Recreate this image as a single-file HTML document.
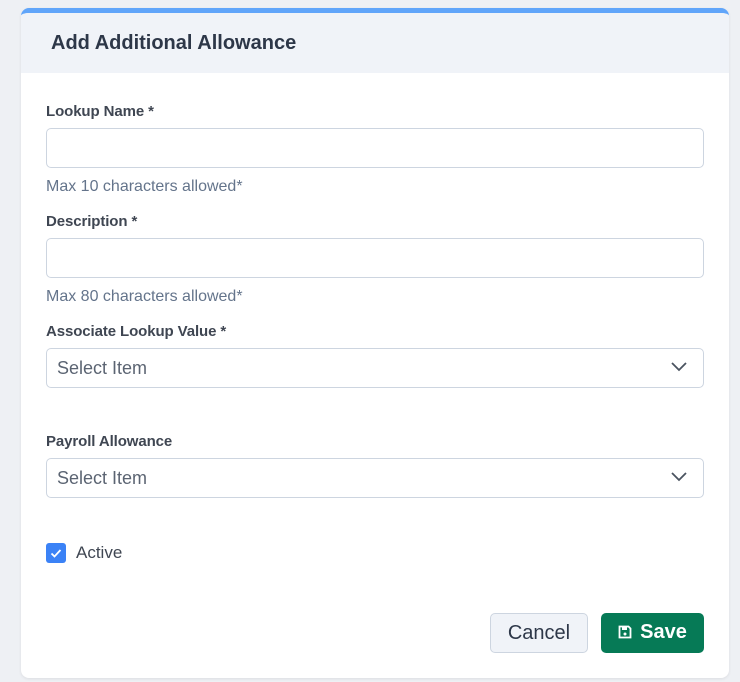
<!DOCTYPE html>
<html><head><meta charset="utf-8"><style>
*{box-sizing:border-box;margin:0;padding:0}
body{width:740px;height:682px;background:#eef0f4;font-family:"Liberation Sans",sans-serif;position:relative;overflow:hidden}
.card{position:absolute;left:21px;top:8px;width:708px;height:670px;background:#fff;border-radius:8px;border-top:5px solid #60a5fa;overflow:hidden;box-shadow:0 1px 3px rgba(0,0,0,.08)}
.hdr{height:60px;background:#f0f3f8;padding-left:30px;font-size:20px;font-weight:bold;color:#2d3748;line-height:60px}
.lbl{position:absolute;left:25px;font-size:15px;font-weight:bold;color:#3f4652;letter-spacing:-0.1px}
.inp{position:absolute;left:25px;width:658px;height:40px;border:1px solid #cdd5e0;border-radius:5px;background:#fff}
.help{position:absolute;left:25px;font-size:16px;color:#64748b}
.sel{font-size:18px;color:#5b6472;line-height:38px;padding-left:10px}
.chev{position:absolute;right:16px;top:13px}
.btn{position:absolute;top:600px;height:40px;border-radius:5px;font-size:20px;line-height:38px;text-align:center}
</style></head><body>
<div class="card">
<div class="hdr">Add Additional Allowance</div>
<div class="lbl" style="top:90px">Lookup Name *</div>
<div class="inp" style="top:115px"></div>
<div class="help" style="top:165px">Max 10 characters allowed*</div>
<div class="lbl" style="top:200px">Description *</div>
<div class="inp" style="top:225px"></div>
<div class="help" style="top:275px">Max 80 characters allowed*</div>
<div class="lbl" style="top:310px">Associate Lookup Value *</div>
<div class="inp sel" style="top:335px">Select Item<svg class="chev" width="16" height="10" viewBox="0 0 16 10"><path d="M1 1l7 7 7-7" fill="none" stroke="#4a5360" stroke-width="1.8"/></svg></div>
<div class="lbl" style="top:420px">Payroll Allowance</div>
<div class="inp sel" style="top:445px">Select Item<svg class="chev" width="16" height="10" viewBox="0 0 16 10"><path d="M1 1l7 7 7-7" fill="none" stroke="#4a5360" stroke-width="1.8"/></svg></div>
<div style="position:absolute;left:25px;top:530px;width:20px;height:20px;background:#3b82f6;border-radius:3px"><svg width="20" height="20" viewBox="0 0 20 20"><path d="M5.5 10.5l3 3 6-6.5" fill="none" stroke="#fff" stroke-width="1.8"/></svg></div>
<div style="position:absolute;left:55px;top:530px;font-size:17px;color:#3f4652">Active</div>
<div class="btn" style="left:469px;width:98px;background:#f0f3f8;border:1px solid #cdd5e0;color:#2d3748">Cancel</div>
<div class="btn" style="left:580px;width:103px;background:#067a56;color:#fff;font-weight:bold"><svg width="14" height="14" viewBox="0 0 14 14" style="vertical-align:-1px;margin-right:8px"><path d="M1.5 1.5h9l2 2v9h-11z" fill="none" stroke="#fff" stroke-width="1.8"/><rect x="4" y="2" width="5" height="3" fill="#fff"/><circle cx="7" cy="9" r="1.5" fill="#fff"/></svg>Save</div>
</div>
</body></html>
